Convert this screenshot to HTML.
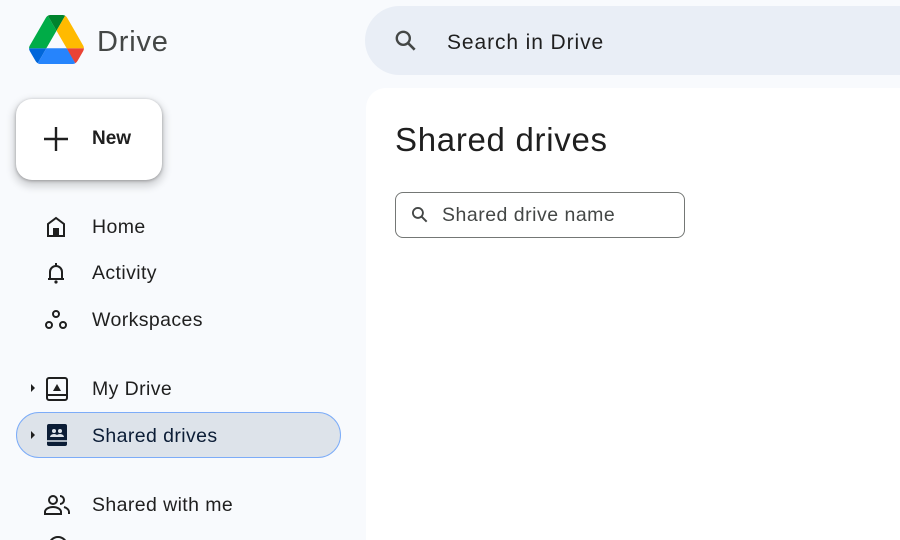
<!DOCTYPE html>
<html style="width:900px;height:540px;overflow:hidden"><head><style>
body{margin:0;width:900px;height:540px;background:#f8fafd;font-family:"Liberation Sans",sans-serif;position:relative;overflow:hidden;color:#1f1f1f}
.abs{position:absolute}
.nav{position:absolute;left:92px;font-size:19.5px;color:#1f1f1f;line-height:24px;letter-spacing:0.4px}
.ic{position:absolute;left:44px}
</style></head><body>
<svg class="abs" style="left:29px;top:15px" width="55" height="49" viewBox="0 0 87.3 78">
<path d="M6.6 66.85l3.850 6.65c.8 1.4 1.95 2.5 3.3 3.3L27.5 53H0c0 1.55.4 3.1 1.2 4.5z" fill="#0066da"/>
<path d="M43.65 25L29.9 1.2c-1.35.8-2.5 1.9-3.3 3.3L1.2 48.5C.4 49.9 0 51.45 0 53h27.5z" fill="#00ac47"/>
<path d="M73.55 76.8c1.35-.8 2.5-1.9 3.3-3.3l1.6-2.75 7.65-13.25c.8-1.4 1.2-2.950 1.2-4.5H59.8l5.85 11.5z" fill="#ea4335"/>
<path d="M43.65 25L57.4 1.2C56.05.4 54.5 0 52.9 0H34.4c-1.6 0-3.15.45-4.5 1.2z" fill="#00832d"/>
<path d="M59.8 53H27.5L13.75 76.8c1.35.8 2.9 1.2 4.5 1.2h50.8c1.6 0 3.15-.45 4.5-1.2z" fill="#2684fc"/>
<path d="M73.4 26.5l-12.7-22c-.8-1.4-1.95-2.5-3.3-3.3L43.65 25 59.8 53h27.45c0-1.55-.4-3.1-1.2-4.5z" fill="#ffba00"/>
</svg>
<div class="abs" style="left:97px;top:25px;font-size:29px;color:#444746;line-height:34px;letter-spacing:0.8px">Drive</div>

<div class="abs" style="left:365px;top:6px;width:600px;height:69px;border-radius:35px;background:#e9eef6"></div>
<svg class="abs" style="left:393px;top:28px" width="26" height="26" viewBox="0 0 24 24"><circle cx="9.5" cy="9.5" r="6" fill="none" stroke="#444746" stroke-width="2.2"/><path d="M14 14l6 6" stroke="#444746" stroke-width="2.4"/></svg>
<div class="abs" style="left:447px;top:30px;font-size:21px;color:#1f1f1f;line-height:26px;letter-spacing:0.9px">Search in Drive</div>

<div class="abs" style="left:366px;top:88px;width:600px;height:452px;border-radius:20px 0 0 0;background:#fff"></div>
<div class="abs" style="left:395px;top:121px;font-size:33px;line-height:38px;color:#1f1f1f;letter-spacing:0.7px">Shared drives</div>
<div class="abs" style="left:395px;top:192px;width:290px;height:46px;border:1px solid #747775;border-radius:8px;box-sizing:border-box"></div>
<svg class="abs" style="left:410px;top:205px" width="20" height="20" viewBox="0 0 24 24"><circle cx="9.5" cy="9.5" r="6" fill="none" stroke="#444746" stroke-width="2.2"/><path d="M14 14l6 6" stroke="#444746" stroke-width="2.4"/></svg>
<div class="abs" style="left:442px;top:203px;font-size:19.5px;line-height:24px;color:#444746;letter-spacing:0.5px">Shared drive name</div>

<div class="abs" style="left:16px;top:99px;width:146px;height:81px;border-radius:16px;background:#fff;box-shadow:0 1px 3px rgba(0,0,0,.3),0 4px 8px 3px rgba(0,0,0,.15)"></div>
<svg class="abs" style="left:44px;top:127px" width="24" height="24" viewBox="0 0 24 24"><path d="M12 0v24M0 12h24" stroke="#1f1f1f" stroke-width="2.4"/></svg>
<div class="abs" style="left:92px;top:128px;font-size:19px;font-weight:bold;line-height:22px;color:#1f1f1f">New</div>

<svg class="ic" style="top:215px" width="24" height="24" viewBox="0 0 24 24"><path d="M4 21V9l8-6 8 6v12z" fill="none" stroke="#1f1f1f" stroke-width="2"/><rect x="9" y="13" width="6" height="8" fill="#1f1f1f"/></svg>
<div class="nav" style="top:215px">Home</div>
<svg class="ic" style="top:261px" width="24" height="24" viewBox="0 0 24 24"><path d="M6 18V11a6 6 0 0 1 12 0v7zM4 18h16M12 2v3" fill="none" stroke="#1f1f1f" stroke-width="2"/><circle cx="12" cy="21" r="1.6" fill="#1f1f1f"/></svg>
<div class="nav" style="top:261px">Activity</div>
<svg class="ic" style="top:308px" width="24" height="24" viewBox="0 0 24 24"><g fill="none" stroke="#1f1f1f" stroke-width="2"><circle cx="12" cy="6" r="3"/><circle cx="5" cy="17" r="3"/><circle cx="19" cy="17" r="3"/></g></svg>
<div class="nav" style="top:308px">Workspaces</div>

<div class="abs" style="left:31px;top:384px;width:0;height:0;border-top:4px solid transparent;border-bottom:4px solid transparent;border-left:4px solid #1f1f1f"></div>
<svg class="ic" style="top:377px;left:45px" width="24" height="24" viewBox="0 0 24 24"><rect x="2" y="1" width="20" height="22" rx="2" fill="none" stroke="#1f1f1f" stroke-width="2"/><path d="M3 18h18" stroke="#1f1f1f" stroke-width="2"/><path d="M12 7l4 7H8z" fill="#1f1f1f"/></svg>
<div class="nav" style="top:377px">My Drive</div>

<div class="abs" style="left:16px;top:412px;width:325px;height:46px;border-radius:23px;background:#dde3ea;border:1.5px solid #7cacf8;box-sizing:border-box"></div>
<div class="abs" style="left:31px;top:431px;width:0;height:0;border-top:4px solid transparent;border-bottom:4px solid transparent;border-left:4px solid #1f1f1f"></div>
<svg class="ic" style="top:423px;left:45px" width="24" height="24" viewBox="0 0 24 24"><rect x="2" y="1" width="20" height="22" rx="2" fill="#0b1d36"/><path d="M2 18h20" stroke="#dde3ea" stroke-width="1.5"/><circle cx="9" cy="8" r="2" fill="#dde3ea"/><circle cx="15" cy="8" r="2" fill="#dde3ea"/><path d="M5 14a4 3 0 0 1 8 0zM11 14a4 3 0 0 1 8 0z" fill="#dde3ea"/></svg>
<div class="nav" style="top:424px;color:#0b1d36">Shared drives</div>

<svg class="ic" style="top:493px" width="26" height="24" viewBox="0 0 26 24"><g fill="none" stroke="#1f1f1f" stroke-width="2"><circle cx="9" cy="7" r="4"/><path d="M1 21v-2c0-3 4-5 8-5s8 2 8 5v2z"/><path d="M16 3a4 4 0 0 1 0 8M20 14c3 1 5 3 5 5v2"/></g></svg>
<div class="nav" style="top:493px">Shared with me</div>
<div class="abs" style="left:48px;top:536px;width:16px;height:16px;border:2px solid #1f1f1f;border-radius:50%"></div>
</body></html>
